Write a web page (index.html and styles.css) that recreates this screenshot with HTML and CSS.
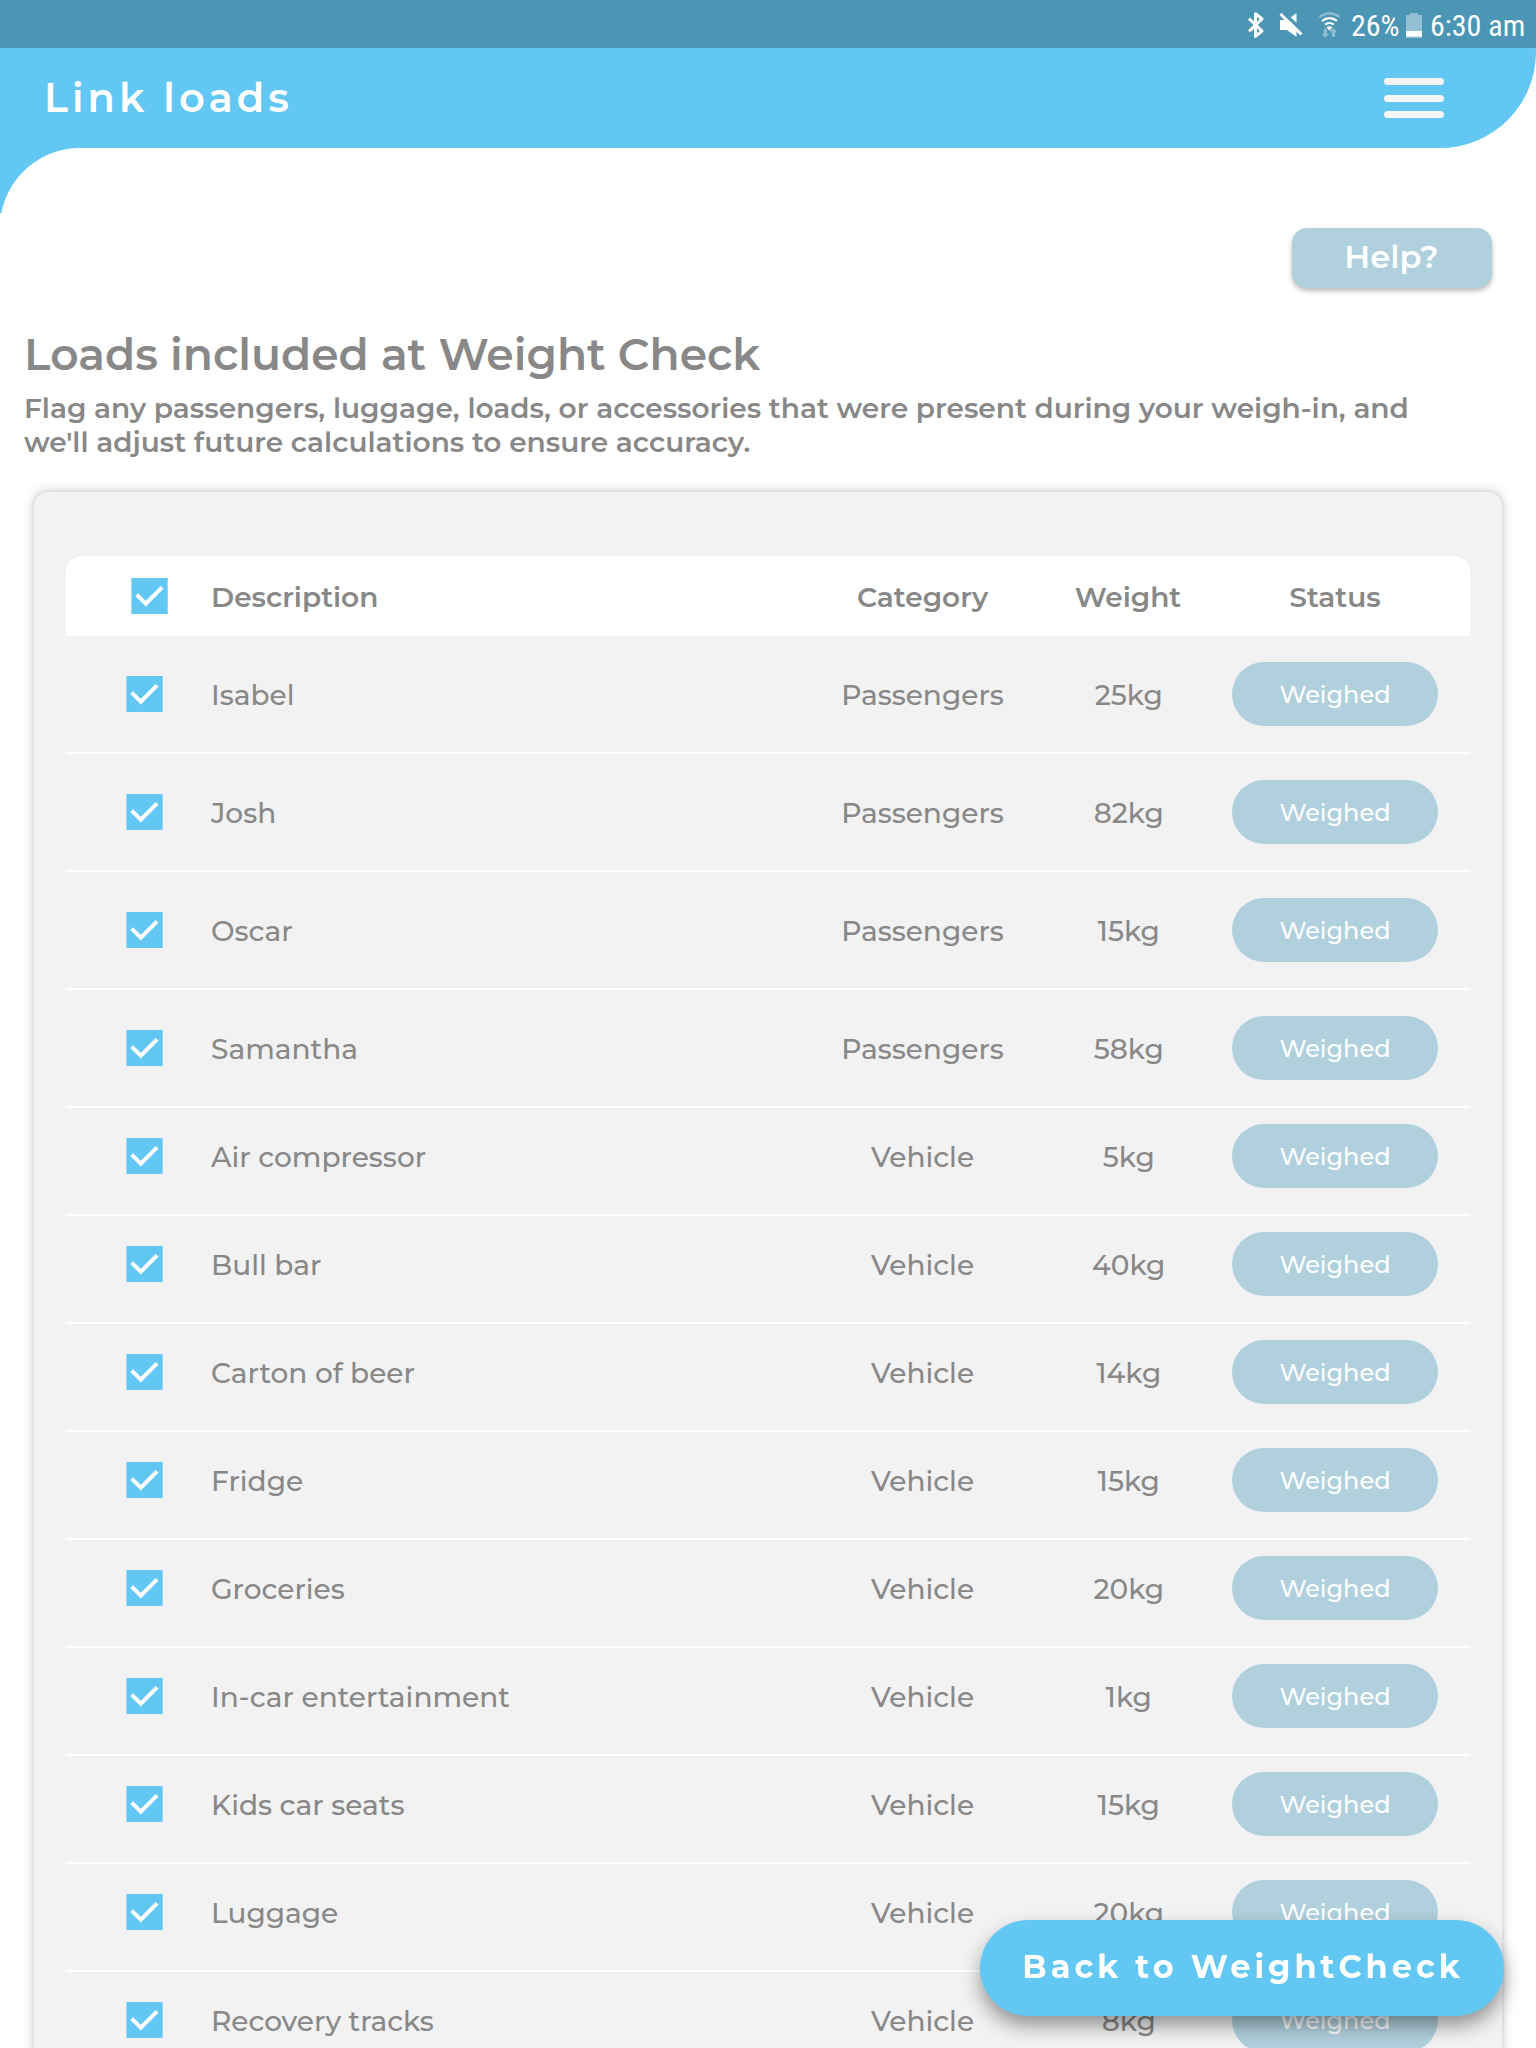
FILE: index.html
```html
<!DOCTYPE html>
<html lang="en">
<head>
<meta charset="utf-8">
<title>Link loads</title>
<link rel="stylesheet" href="styles.css">
</head>
<body>
<svg class="defs" width="0" height="0" aria-hidden="true">
  <symbol id="check" viewBox="0 0 38 36"><path d="M.4 0h36.300v36H.4z" fill="#62c7f2"/><path d="M5.700 16.600 14.800 25.700 31.100 9.400" fill="none" stroke="#fff" stroke-width="4"/></symbol>
</svg>
<div class="statusbar">
  <svg class="sys-icons" width="96" height="30" viewBox="0 0 96 30">
    <path d="M3 9.700 16 22 9.500 27.300V4.700L16 10 3 22.300" fill="none" stroke="#fff" stroke-width="3" stroke-linejoin="round"/>
    <path d="M34 11h7l9.500-7v24L41 21h-7z" fill="#fff"/>
    <path d="M36.600 2.900 58 23.400" stroke="#4b95b5" stroke-width="3.400"/>
    <path d="M34.500 5 55.500 25.500" stroke="#fff" stroke-width="3"/>
    <g transform="translate(0 1.700)">
      <g fill="none" stroke-width="2.300">
        <path d="M73.500 6.500a15 15 0 0 1 20 0" stroke="#93bfd2"/>
        <path d="M76 10.300a11.500 11.500 0 0 1 15 0M79.300 14a6.500 6.500 0 0 1 8.400 0" stroke="#fff"/>
      </g>
      <path d="M80.500 16.500q3-2 6 0l-3 3.500z" fill="#fff"/>
      <path d="M77.800 18h3v5h2.200l-3.700 4-3.700-4h2.200zM86 26h3v-4.500h2.200l-3.700-4-3.700 4H86z" fill="#93bfd2"/>
    </g>
  </svg>
  <span class="sys-text battery-level">26%</span>
  <svg class="battery" width="16" height="25" viewBox="0 0 16 25"><path d="M4 0h8v2h4v23H0V2h4z" fill="#93bfd2"/><path d="M0 18h16v5.500H0z" fill="#fff"/></svg>
  <span class="sys-text clock">6:30 am</span>
</div>
<header class="appbar">
  <h1 class="title">Link loads</h1>
  <div class="menu"><i></i><i></i><i></i></div>
</header>
<div class="notch"></div>
<main class="page">
  <div class="actions"><button class="help">Help?</button></div>
  <h2 class="heading">Loads included at Weight Check</h2>
  <p class="intro">Flag any passengers, luggage, loads, or accessories that were present during your weigh-in, and<br>we'll adjust future calculations to ensure accuracy.</p>
  <section class="card">
    <div class="row head"><svg class="box"><use href="#check"/></svg><span class="desc">Description</span><span class="mid">Category</span><span class="mid">Weight</span><span class="mid">Status</span></div>
    <div class="row tall"><svg class="box"><use href="#check"/></svg><span class="desc">Isabel</span><span class="mid">Passengers</span><span class="mid kg">25kg</span><span class="pill">Weighed</span></div>
    <div class="row tall"><svg class="box"><use href="#check"/></svg><span class="desc">Josh</span><span class="mid">Passengers</span><span class="mid kg">82kg</span><span class="pill">Weighed</span></div>
    <div class="row tall"><svg class="box"><use href="#check"/></svg><span class="desc">Oscar</span><span class="mid">Passengers</span><span class="mid kg">15kg</span><span class="pill">Weighed</span></div>
    <div class="row tall"><svg class="box"><use href="#check"/></svg><span class="desc">Samantha</span><span class="mid">Passengers</span><span class="mid kg">58kg</span><span class="pill">Weighed</span></div>
    <div class="row"><svg class="box"><use href="#check"/></svg><span class="desc">Air compressor</span><span class="mid">Vehicle</span><span class="mid kg">5kg</span><span class="pill">Weighed</span></div>
    <div class="row"><svg class="box"><use href="#check"/></svg><span class="desc">Bull bar</span><span class="mid">Vehicle</span><span class="mid kg">40kg</span><span class="pill">Weighed</span></div>
    <div class="row"><svg class="box"><use href="#check"/></svg><span class="desc">Carton of beer</span><span class="mid">Vehicle</span><span class="mid kg">14kg</span><span class="pill">Weighed</span></div>
    <div class="row"><svg class="box"><use href="#check"/></svg><span class="desc">Fridge</span><span class="mid">Vehicle</span><span class="mid kg">15kg</span><span class="pill">Weighed</span></div>
    <div class="row"><svg class="box"><use href="#check"/></svg><span class="desc">Groceries</span><span class="mid">Vehicle</span><span class="mid kg">20kg</span><span class="pill">Weighed</span></div>
    <div class="row"><svg class="box"><use href="#check"/></svg><span class="desc">In-car entertainment</span><span class="mid">Vehicle</span><span class="mid kg">1kg</span><span class="pill">Weighed</span></div>
    <div class="row"><svg class="box"><use href="#check"/></svg><span class="desc">Kids car seats</span><span class="mid">Vehicle</span><span class="mid kg">15kg</span><span class="pill">Weighed</span></div>
    <div class="row"><svg class="box"><use href="#check"/></svg><span class="desc">Luggage</span><span class="mid">Vehicle</span><span class="mid kg">20kg</span><span class="pill">Weighed</span></div>
    <div class="row"><svg class="box"><use href="#check"/></svg><span class="desc">Recovery tracks</span><span class="mid">Vehicle</span><span class="mid kg">8kg</span><span class="pill">Weighed</span></div>
  </section>
</main>
<button class="back">Back to WeightCheck</button>
</body>
</html>
```
FILE: styles.css
```css
* { box-sizing: border-box; }
html, body { height: 2048px; overflow: hidden; }
body {
  margin: 0;
  background: #fff;
  color: #888;
  font-family: Montserrat, Inter, sans-serif;
  font-size: 28px;
  font-weight: 500;
}
h1, h2, p { margin: 0; }
button { border: 0; padding: 0; color: #fff; font-family: inherit; }
.defs { display: block; height: 0; }

.statusbar {
  display: flex;
  align-items: center;
  height: 48px;
  padding-left: 1246px;
  background: #4b95b5;
  color: #fff;
}
.sys-icons { flex: none; margin-right: 9px; }
.sys-text {
  flex: none;
  font-family: "Roboto Condensed", Roboto, sans-serif;
  font-stretch: 75%;
  font-size: 30px;
  font-weight: 400;
  line-height: 48px;
  padding-top: 4px;
  white-space: nowrap;
}
.battery-level { width: 55px; }
.battery { flex: none; margin-right: 8px; margin-top: 2px; }

.appbar {
  display: flex;
  align-items: center;
  justify-content: space-between;
  height: 100px;
  padding: 0 92px 0 44px;
  background: #62c7f2;
  border-bottom-right-radius: 96px;
}
.title { margin-bottom: 1px; color: #fff; font-size: 40px; font-weight: 600; letter-spacing: 4px; line-height: 99px; }
.menu { display: flex; flex-direction: column; gap: 9.500px; width: 60px; }
.menu i { height: 7px; border-radius: 3.500px; background: #f6f6f6; }
.notch {
  height: 65px;
  background: radial-gradient(circle at 80px 80px, #fff 79.500px, #62c7f2 80.500px) 0 0 / 80px 80px no-repeat;
}

.page { padding: 15px 32px 0; }
.actions { display: flex; justify-content: flex-end; padding-right: 12px; }
.help {
  width: 200px;
  height: 60px;
  padding: 0 1px 3px 0;
  border-radius: 15px;
  background: #b0d0dd;
  box-shadow: 0 3px 5px rgba(0, 0, 0, .27);
  font-size: 32px;
  font-weight: 600;
}
.heading { margin: 39px 0 0 -8px; font-size: 44px; font-weight: 600; line-height: 54px; white-space: nowrap; }
.intro { margin: 10px 0 0 -8px; font-weight: 600; line-height: 34px; white-space: nowrap; }

.card {
  margin-top: 31px;
  height: 1600px;
  padding: 64px 32px 0;
  border: 2px solid #dee2e6;
  border-radius: 16px;
  background: #f2f2f2;
  box-shadow: 0 0 10px rgba(0, 0, 0, .17);
}
.row {
  display: grid;
  grid-template-columns: 145px 602px 219px 192px 222px;
  align-items: center;
  height: 108px;
  padding: 16px 0 26px;
  border-bottom: 2px solid #fff;
}
.row.tall { height: 118px; padding-top: 26px; }
.row.head { height: 80px; padding: 0; border: 0; border-radius: 16px 16px 0 0; background: #fff; font-weight: 600; }
.box { display: block; width: 38px; height: 36px; margin-left: 60px; }
.head .box { margin-left: 65px; }
.desc, .mid { padding-top: 2px; line-height: 34px; white-space: nowrap; }
.mid { text-align: center; }
.kg { padding-left: 1.500px; }
.pill {
  height: 64px;
  margin: 0 8px;
  border-radius: 32px;
  background: #b0d0dd;
  color: #fff;
  font-size: 24px;
  line-height: 65px;
  text-align: center;
}

.back {
  position: fixed;
  left: 980px;
  top: 1920px;
  width: 524px;
  height: 96px;
  padding: 0 0 3px 2px;
  border-radius: 48px;
  background: #62c7f2;
  box-shadow: 0 10px 20px -1px rgba(0, 0, 0, .42);
  font-size: 32px;
  font-weight: 700;
  letter-spacing: 4px;
}
```
